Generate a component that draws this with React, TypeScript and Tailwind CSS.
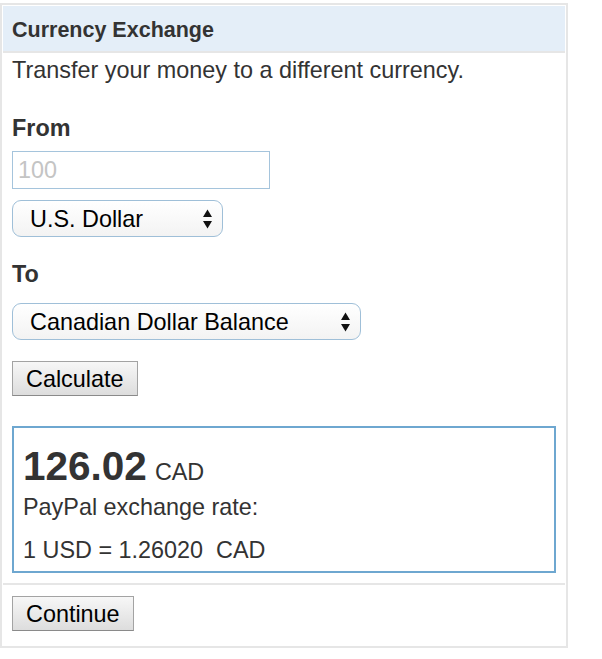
import { useState } from 'react';

const font = "font-['Liberation_Sans',Arial,Helvetica,sans-serif]";

const SelectArrows = () => (
  <svg
    width="9"
    height="20"
    viewBox="0 0 9 20"
    className="pointer-events-none absolute right-[11px] top-1/2 -translate-y-1/2"
  >
    <polygon points="0,8 4.5,0.5 9,8" fill="#111" />
    <polygon points="0,12 9,12 4.5,19.5" fill="#111" />
  </svg>
);

type SelectProps = {
  value: string;
  options: string[];
  width: string;
  onChange: (v: string) => void;
};

const Select = ({ value, options, width, onChange }: SelectProps) => (
  <div className={`relative h-[37px] ${width}`}>
    <select
      value={value}
      onChange={(e) => onChange(e.target.value)}
      className={`h-full w-full appearance-none rounded-[9px] border border-[#9fbfd8] bg-gradient-to-b from-[#ffffff] to-[#f3f3f3] pl-[17px] pr-8 text-[23.4px] leading-[28px] text-black outline-none ${font}`}
    >
      {options.map((o) => (
        <option key={o}>{o}</option>
      ))}
    </select>
    <SelectArrows />
  </div>
);

const Button = ({ children }: { children: React.ReactNode }) => (
  <button
    className={`h-[35px] border border-[#a3a3a3] border-b-[#8a8a8a] bg-gradient-to-b from-[#f7f7f7] to-[#dddddd] px-[13px] text-[23.4px] leading-[28px] text-black ${font}`}
  >
    {children}
  </button>
);

export default function App() {
  const [from, setFrom] = useState('U.S. Dollar');
  const [to, setTo] = useState('Canadian Dollar Balance');

  return (
    <div className={`min-h-[659px] bg-white pt-[3px] ${font}`}>
      <div className="w-[568px] border-2 border-[#e6e6e6] bg-white p-[1px]">
        {/* Header */}
        <div className="h-[47px] border-b-2 border-[#e6e6e6] bg-[#e4eef8] pl-[9px] pt-[12px]">
          <h2 className="text-[21.5px] font-bold leading-[24px] text-[#333]">Currency Exchange</h2>
        </div>

        {/* Form */}
        <div className="pl-[9px] pt-[3px] text-[#333]">
          <p className="text-[23.4px] leading-[28px]">Transfer your money to a different currency.</p>

          <label className="mt-[30px] block text-[23.4px] font-bold leading-[28px]">From</label>
          <input
            type="text"
            placeholder="100"
            className={`mt-[9px] block h-[38px] w-[258px] border border-[#a5c4dc] px-[5px] text-[23.4px] text-black outline-none placeholder:text-[#c4c4c4] ${font}`}
          />
          <div className="mt-[11px]">
            <Select
              value={from}
              onChange={setFrom}
              width="w-[211px]"
              options={['U.S. Dollar', 'Euro', 'British Pound']}
            />
          </div>

          <label className="mt-[23px] block text-[23.4px] font-bold leading-[28px]">To</label>
          <div className="mt-[15px]">
            <Select
              value={to}
              onChange={setTo}
              width="w-[349px]"
              options={['Canadian Dollar Balance', 'U.S. Dollar Balance']}
            />
          </div>

          <div className="mt-[21px]">
            <Button>Calculate</Button>
          </div>

          {/* Result */}
          <div className="mt-[30px] h-[147px] w-[544px] border-2 border-[#6ea7d0] pl-[9px] pt-[16px]">
            <div className="flex items-baseline leading-[44px]">
              <span className="text-[40.5px] font-bold text-[#333]">126.02</span>
              <span className="ml-[8px] text-[23.4px] text-[#333]">CAD</span>
            </div>
            <p className="-mt-[1px] text-[23.4px] leading-[28px]">PayPal exchange rate:</p>
            <p className="mt-[15px] whitespace-pre text-[23.4px] leading-[28px]">1 USD = 1.26020  CAD</p>
          </div>
        </div>

        {/* Footer */}
        <div className="mt-[10px] border-t-2 border-[#e6e6e6] pb-[14px] pl-[9px] pt-[11px]">
          <Button>Continue</Button>
        </div>
      </div>
    </div>
  );
}
